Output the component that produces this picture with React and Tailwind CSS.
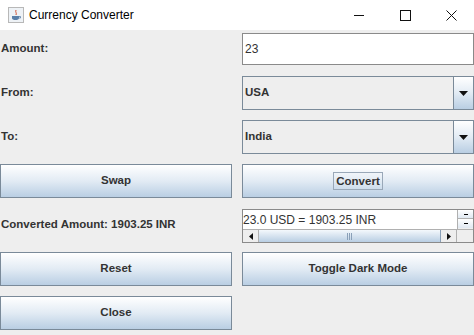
import React from "react";

const font = { fontFamily: '"Liberation Sans", Arial, sans-serif' };

function MetalButton({ children, focus }) {
  return (
    <div className="h-[34px] border border-[#7a8a99] bg-gradient-to-b from-[#ffffff] via-[#e2ebf4] to-[#b9cee3] flex items-center justify-center text-[11.5px] font-bold text-[#333333]">
      {focus ? (
        <span className="border border-[#99a8b8] px-[2px] leading-[16px]">{children}</span>
      ) : (
        children
      )}
    </div>
  );
}

function Label({ children }) {
  return (
    <div className="h-[34px] flex items-center pl-[1px] text-[11.5px] font-bold text-[#333333]">
      {children}
    </div>
  );
}

function Combo({ value }) {
  return (
    <div className="h-[34px] flex border border-[#7a8a99] bg-[#eeeeee]">
      <div className="flex-1 flex items-center pl-[2px] text-[11.5px] font-bold text-[#333333] border-r border-[#7a8a99]">
        {value}
      </div>
      <div className="w-[19px] flex items-center justify-center bg-gradient-to-b from-[#ffffff] via-[#e2ebf4] to-[#b9cee3]">
        <svg width="9" height="5" viewBox="0 0 9 5">
          <path d="M0 0 H9 L4.5 5 Z" fill="#111" />
        </svg>
      </div>
    </div>
  );
}

function Arrow({ dir }) {
  const d = {
    left: "M4 0 L0 3.5 L4 7 Z",
    right: "M0 0 L4 3.5 L0 7 Z",
  }[dir];
  return (
    <svg width="4" height="7" viewBox="0 0 4 7">
      <path d={d} fill="#111" />
    </svg>
  );
}

export default function App() {
  return (
    <div className="w-[474px] h-[335px] overflow-hidden bg-[#eeeeee]" style={font}>
      {/* title bar */}
      <div className="h-[30px] bg-white flex items-center">
        <div className="ml-[8px] w-[16px] h-[16px] border border-[#b8b8b8] bg-[#eef2f6] flex items-center justify-center">
          <svg width="12" height="12" viewBox="0 0 12 12">
            <path d="M6 1 C5 3 7 4 6 6" stroke="#d05030" strokeWidth="1" fill="none" />
            <path d="M2 7 H9 V9 C9 10.5 7.5 11 5.5 11 C3.5 11 2 10.5 2 9 Z" fill="#5a7fa8" />
            <path d="M9 7.5 H10.5 V9 H9" stroke="#5a7fa8" strokeWidth="0.8" fill="none" />
          </svg>
        </div>
        <span className="ml-[5px] text-[12px] text-black">Currency Converter</span>
        <div className="ml-auto flex items-center h-full">
          <div className="w-[46px] h-full flex items-center justify-center">
            <svg width="10" height="10" viewBox="0 0 10 10">
              <path d="M0 5.5 H10" stroke="#111" strokeWidth="1" />
            </svg>
          </div>
          <div className="w-[46px] h-full flex items-center justify-center">
            <svg width="11" height="11" viewBox="0 0 11 11">
              <rect x="0.5" y="0.5" width="10" height="10" stroke="#111" strokeWidth="1" fill="none" />
            </svg>
          </div>
          <div className="w-[46px] h-full flex items-center justify-center">
            <svg width="11" height="11" viewBox="0 0 11 11">
              <path d="M0.5 0.5 L10.5 10.5 M10.5 0.5 L0.5 10.5" stroke="#111" strokeWidth="1" />
            </svg>
          </div>
        </div>
      </div>

      {/* content grid */}
      <div className="grid grid-cols-[232px_232px] gap-x-[10px] gap-y-[10px] pt-[2px]">
        <Label>Amount:</Label>
        <div className="h-[32px] mt-[1px] border border-[#8a8a8a] bg-white flex items-center pl-[2px] text-[12px] text-[#333333]">
          23
        </div>

        <Label>From:</Label>
        <Combo value="USA" />

        <Label>To:</Label>
        <Combo value="India" />

        <MetalButton>Swap</MetalButton>
        <MetalButton focus>Convert</MetalButton>

        <Label>Converted Amount: 1903.25 INR</Label>
        <div className="h-[34px] flex flex-col">
          <div className="h-[34px] mt-[1px] border border-[#8a8a8a] flex flex-col bg-[#eeeeee]">
            <div className="flex h-[19px]">
              <div className="flex-1 bg-white flex items-center text-[12px] text-[#333333] leading-none">
                23.0 USD = 1903.25 INR
              </div>
              <div className="w-[16px] border-l border-[#b0b0b0] flex flex-col bg-[#eeeeee]">
                <div className="h-[9px] flex items-center justify-center bg-gradient-to-b from-white to-[#dfe8f1] border-b border-[#b0b0b0]">
                  <div className="w-[4px] h-[1px] bg-black" />
                </div>
                <div className="h-[9px] flex items-center justify-center bg-gradient-to-b from-white to-[#dfe8f1]">
                  <div className="w-[4px] h-[1px] bg-black" />
                </div>
              </div>
            </div>
            <div className="flex h-[13px] border-t border-[#b0b0b0]">
              <div className="w-[16px] flex items-center justify-center bg-[#eeeeee] border-r border-[#b0b0b0]">
                <Arrow dir="left" />
              </div>
              <div className="flex-1 bg-gradient-to-b from-[#f4f8fc] to-[#b9cee3] border-r border-[#8aa0b8] flex items-center justify-center">
                <div className="flex gap-[1px]">
                  <div className="w-[1px] h-[7px] bg-[#8aa0b8]" />
                  <div className="w-[1px] h-[7px] bg-[#8aa0b8]" />
                  <div className="w-[1px] h-[7px] bg-[#8aa0b8]" />
                </div>
              </div>
              <div className="w-[16px] flex items-center justify-center bg-[#eeeeee] border-r border-[#b0b0b0]">
                <Arrow dir="right" />
              </div>
              <div className="w-[16px] bg-[#eeeeee]" />
            </div>
          </div>
        </div>

        <MetalButton>Reset</MetalButton>
        <MetalButton>Toggle Dark Mode</MetalButton>

        <MetalButton>Close</MetalButton>
        <div />
      </div>
    </div>
  );
}
